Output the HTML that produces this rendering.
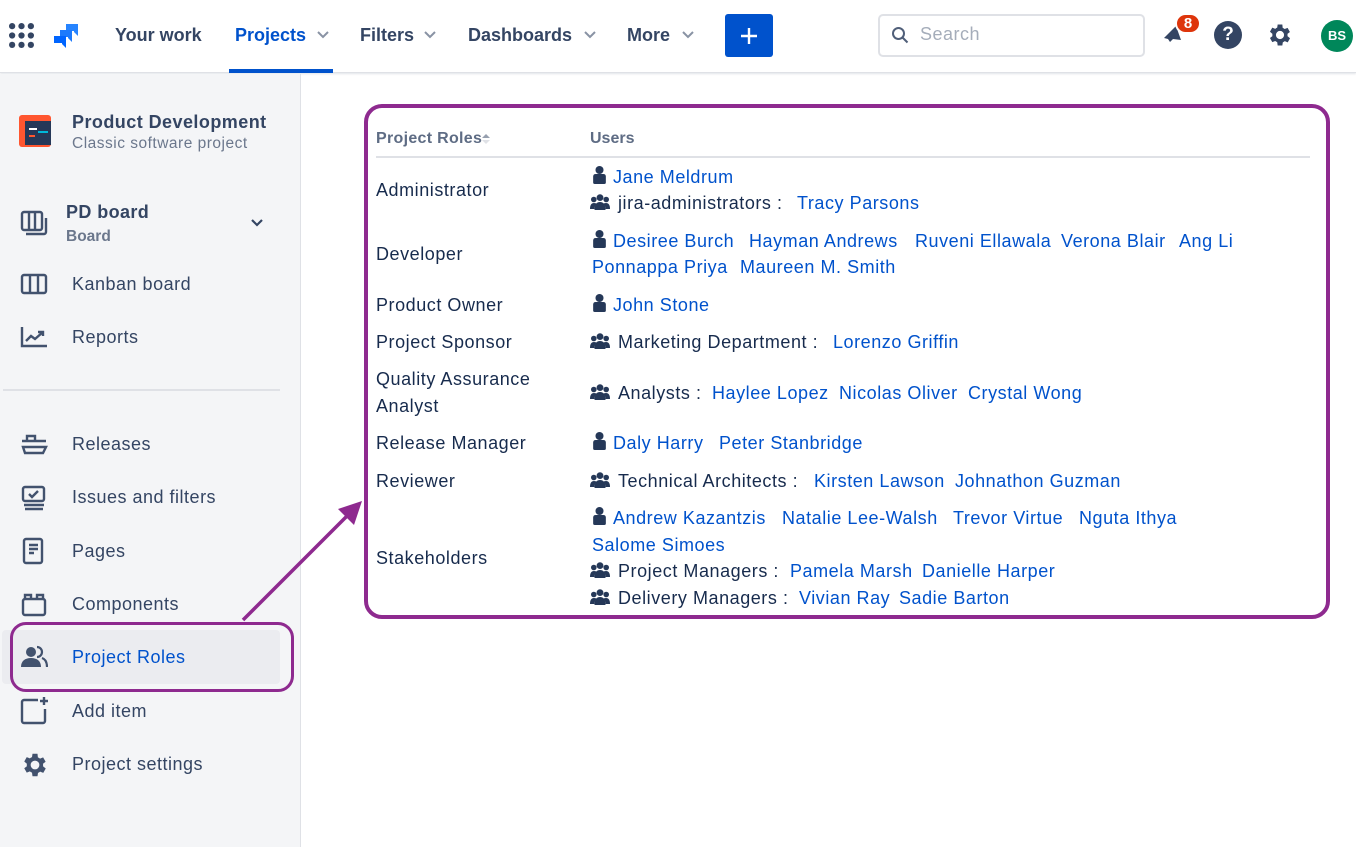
<!DOCTYPE html>
<html><head><meta charset="utf-8"><style>
*{margin:0;padding:0;box-sizing:border-box}
body{width:1356px;height:847px;overflow:hidden;background:#fff;font-family:"Liberation Sans",sans-serif;position:relative;color:#172b4d}
.a{position:absolute;white-space:nowrap}
.top{position:absolute;left:0;top:0;width:1356px;height:73px;background:#fff;border-bottom:1px solid #dfe1e6;box-shadow:0 1px 2px rgba(9,30,66,.12)}
.nav{position:absolute;top:25px;font-size:18px;font-weight:bold;color:#344563}
.side{position:absolute;left:0;top:74px;width:301px;height:773px;background:#f4f5f7;border-right:1px solid #dfe1e6}
.si{position:absolute;left:72px;font-size:18px;color:#344563;line-height:22px;letter-spacing:.5px}
.ic{position:absolute;left:20px}
.t{position:absolute;font-size:18px;line-height:22px;white-space:nowrap;color:#172b4d;letter-spacing:.55px}
.l{position:absolute;font-size:18px;line-height:22px;white-space:nowrap;color:#0052cc;letter-spacing:.55px}
.h{position:absolute;font-size:16px;font-weight:bold;color:#5e6c84;line-height:20px}
</style></head><body>
<div class="top"></div>
<svg class="a" style="left:9px;top:23px" width="25" height="25" viewBox="0 0 24 24" fill="#344563">
<circle cx="3" cy="3" r="3"/><circle cx="12" cy="3" r="3"/><circle cx="21" cy="3" r="3"/>
<circle cx="3" cy="12" r="3"/><circle cx="12" cy="12" r="3"/><circle cx="21" cy="12" r="3"/>
<circle cx="3" cy="21" r="3"/><circle cx="12" cy="21" r="3"/><circle cx="21" cy="21" r="3"/></svg>
<svg class="a" style="left:53px;top:24px" width="25" height="24" viewBox="0 0 25 24">
<path d="M13 0h12v12l-4-4v-1h-8z" fill="#2684ff"/><path d="M7 6h12v12l-4-4v-1H7z" fill="#1d7afc"/><path d="M1 12h12v12l-4-4v-1H1z" fill="#0065ff"/></svg>
<div class="nav" style="left:115px">Your work</div>
<div class="nav" style="left:235px;color:#0052cc">Projects</div>
<svg class="a" style="left:317px;top:31px" width="12" height="8"><path d="M1 1l5 5 5-5" stroke="#8993a4" stroke-width="2" fill="none"/></svg>
<div class="a" style="left:229px;top:69px;width:104px;height:4px;background:#0052cc"></div>
<div class="nav" style="left:360px">Filters</div>
<svg class="a" style="left:424px;top:31px" width="12" height="8"><path d="M1 1l5 5 5-5" stroke="#8993a4" stroke-width="2" fill="none"/></svg>
<div class="nav" style="left:468px">Dashboards</div>
<svg class="a" style="left:584px;top:31px" width="12" height="8"><path d="M1 1l5 5 5-5" stroke="#8993a4" stroke-width="2" fill="none"/></svg>
<div class="nav" style="left:627px">More</div>
<svg class="a" style="left:682px;top:31px" width="12" height="8"><path d="M1 1l5 5 5-5" stroke="#8993a4" stroke-width="2" fill="none"/></svg>
<div class="a" style="left:725px;top:14px;width:48px;height:43px;background:#0052cc;border-radius:3px"></div>
<svg class="a" style="left:740px;top:27px" width="18" height="18"><path d="M9 1v16M1 9h16" stroke="#fff" stroke-width="2.4"/></svg>
<div class="a" style="left:878px;top:14px;width:267px;height:43px;border:2px solid #dfe1e6;border-radius:5px;background:#fff"></div>
<svg class="a" style="left:891px;top:26px" width="18" height="18"><circle cx="7.5" cy="7.5" r="5.5" stroke="#505f79" stroke-width="2" fill="none"/><path d="M11.5 11.5l5 5" stroke="#505f79" stroke-width="2"/></svg>
<div class="a" style="left:920px;top:24px;font-size:18px;color:#a5adba;letter-spacing:.5px">Search</div>
<svg class="a" style="left:1162px;top:24px" width="24" height="24"><path d="M2 14l12-12 5 14-8-1-3 3-2-3z" fill="#344563"/></svg>
<div class="a" style="left:1175px;top:13px;width:26px;height:21px;background:#de350b;border-radius:11px;color:#fff;font-size:15px;font-weight:bold;text-align:center;line-height:17px;border:2px solid #fff">8</div>
<div class="a" style="left:1214px;top:21px;width:28px;height:28px;border-radius:50%;background:#344563;color:#fff;font-weight:bold;font-size:19px;text-align:center;line-height:28px">?</div>
<svg class="a" style="left:1266px;top:21px" width="28" height="28" viewBox="0 0 24 24"><path fill="#344563" d="M19.4 13a7.5 7.5 0 000-2l2.1-1.6-2-3.5-2.5 1a7 7 0 00-1.7-1L15 3h-4l-.4 2.7a7 7 0 00-1.7 1l-2.5-1-2 3.5L6.5 11a7.5 7.5 0 000 2l-2.1 1.6 2 3.5 2.5-1a7 7 0 001.7 1L11 21h4l.4-2.7a7 7 0 001.7-1l2.5 1 2-3.5zM13 15.5a3.5 3.5 0 110-7 3.5 3.5 0 010 7z" transform="translate(-1 0)"/></svg>
<div class="a" style="left:1321px;top:20px;width:32px;height:32px;border-radius:50%;background:#00875a;color:#fff;font-weight:bold;font-size:13px;text-align:center;line-height:32px">BS</div>

<div class="side"></div>
<div class="a" style="left:19px;top:115px;width:32px;height:32px;background:#ff5630;border-radius:3px"></div>
<div class="a" style="left:25px;top:121px;width:26px;height:24px;background:#253858"></div>
<div class="a" style="left:29px;top:128px;width:8px;height:2px;background:#fff"></div><div class="a" style="left:38px;top:131px;width:10px;height:2px;background:#00b8d9"></div>
<div class="a" style="left:29px;top:135px;width:6px;height:2px;background:#ff5630"></div>
<div class="a" style="left:72px;top:112px;font-size:18px;font-weight:bold;color:#344563;letter-spacing:.45px">Product Development</div>
<div class="a" style="left:72px;top:135px;font-size:15.5px;color:#6b778c;letter-spacing:.5px">Classic software project</div>

<svg class="ic" style="top:210px" width="28" height="26"><rect x="2" y="2" width="20" height="18" rx="2" stroke="#42526e" stroke-width="2.4" fill="none"/><path d="M9 2v18M15 2v18" stroke="#42526e" stroke-width="2.4"/><path d="M26 8v14a2 2 0 01-2 2H6" stroke="#42526e" stroke-width="2.4" fill="none"/></svg>
<div class="a" style="left:66px;top:202px;font-size:18px;font-weight:bold;color:#344563;letter-spacing:.4px">PD board</div>
<div class="a" style="left:66px;top:228px;font-size:15.5px;font-weight:bold;color:#6b778c">Board</div>
<svg class="a" style="left:251px;top:219px" width="12" height="8"><path d="M1 1l5 5 5-5" stroke="#344563" stroke-width="2.2" fill="none"/></svg>
<svg class="ic" style="top:273px" width="28" height="22"><rect x="2" y="2" width="24" height="18" rx="2" stroke="#42526e" stroke-width="2.4" fill="none"/><path d="M10 2v18M18 2v18" stroke="#42526e" stroke-width="2.4"/></svg>
<div class="si" style="top:273px">Kanban board</div>
<svg class="ic" style="top:326px" width="28" height="22"><path d="M2 1v19h25" stroke="#42526e" stroke-width="2.4" fill="none"/><path d="M6 15l5-5 4 3 8-7M18 6h5v4" stroke="#42526e" stroke-width="2.4" fill="none"/></svg>
<div class="si" style="top:326px">Reports</div>
<div class="a" style="left:3px;top:389px;width:277px;height:2px;background:#dfe1e6"></div>
<svg class="ic" style="top:433px" width="28" height="22"><path d="M7 8V3h8v5M2 8h24M3 14h23l-3 6H5z" stroke="#42526e" stroke-width="2.4" fill="none"/></svg>
<div class="si" style="top:433px">Releases</div>
<svg class="ic" style="top:485px" width="28" height="26"><rect x="3" y="2" width="21" height="14" rx="2" stroke="#42526e" stroke-width="2.4" fill="none"/><path d="M9 9l3 3 6-6M4 20h20M5 24h18" stroke="#42526e" stroke-width="2.4" fill="none"/></svg>
<div class="si" style="top:486px">Issues and filters</div>
<svg class="ic" style="top:537px" width="28" height="28"><rect x="4" y="2" width="18" height="24" rx="2" stroke="#42526e" stroke-width="2.4" fill="none"/><path d="M9 8h9M9 12h9M9 16h5" stroke="#42526e" stroke-width="2.4"/></svg>
<div class="si" style="top:540px">Pages</div>
<svg class="ic" style="top:593px" width="28" height="24"><rect x="3" y="6" width="22" height="16" rx="2" stroke="#42526e" stroke-width="2.4" fill="none"/><path d="M5 6V2h6v4M17 6V2h6v4" stroke="#42526e" stroke-width="2.4" fill="none"/></svg>
<div class="si" style="top:593px">Components</div>
<div class="a" style="left:2px;top:630px;width:278px;height:54px;background:#ebecf0;border-radius:4px"></div>
<div class="a" style="left:10px;top:622px;width:284px;height:70px;border:3px solid #8e2a8f;border-radius:16px"></div>
<svg class="ic" style="top:645px" width="28" height="24"><circle cx="11" cy="7" r="5" fill="#42526e"/><path d="M1 22c0-6 4-9 10-9s10 3 10 9z" fill="#42526e"/><path d="M17 2a5 5 0 010 10M22 13c3 1 5 4 5 9" stroke="#42526e" stroke-width="2.2" fill="none"/></svg>
<div class="si" style="top:646px;color:#0052cc">Project Roles</div>
<svg class="ic" style="top:697px" width="28" height="28"><path d="M18 3H4a2 2 0 00-2 2v19a2 2 0 002 2h19a2 2 0 002-2V12" stroke="#42526e" stroke-width="2.4" fill="none"/><path d="M24 0v8M20 4h8" stroke="#42526e" stroke-width="2.4"/></svg>
<div class="si" style="top:700px">Add item</div>
<svg class="ic" style="top:750px" width="30" height="30" viewBox="0 0 24 24"><path fill="#42526e" d="M19.4 13a7.5 7.5 0 000-2l2.1-1.6-2-3.5-2.5 1a7 7 0 00-1.7-1L15 3h-4l-.4 2.7a7 7 0 00-1.7 1l-2.5-1-2 3.5L6.5 11a7.5 7.5 0 000 2l-2.1 1.6 2 3.5 2.5-1a7 7 0 001.7 1L11 21h4l.4-2.7a7 7 0 001.7-1l2.5 1 2-3.5zM13 15.5a3.5 3.5 0 110-7 3.5 3.5 0 010 7z" transform="translate(-1 0)"/></svg>
<div class="si" style="top:753px">Project settings</div>

<svg class="a" style="left:0;top:0" width="1356" height="847">
<path d="M243 620L352 511" stroke="#8e2a8f" stroke-width="3.5"/>
<path d="M362 501l-24 8 16 16z" fill="#8e2a8f"/>
</svg>
<div class="a" style="left:364px;top:104px;width:966px;height:515px;border:4px solid #8e2a8f;border-radius:18px"></div>

<div class="h" style="left:376px;top:129px;letter-spacing:.3px">Project Roles</div>
<svg class="a" style="left:482px;top:134px" width="8" height="10"><path d="M0 4l4-4 4 4z" fill="#97a0af"/><path d="M0 6l4 4 4-4z" fill="#dfe1e6"/></svg>
<div class="h" style="left:590px;top:129px">Users</div>
<div class="a" style="left:376px;top:156px;width:934px;height:2px;background:#dfe1e6"></div>

<svg width="0" height="0" style="position:absolute"><defs>
<symbol id="p" viewBox="0 0 12 17"><circle cx="6" cy="3.8" r="3.8" fill="#253858"/><path d="M0 10q0-2.5 2.5-2.5h7q2.5 0 2.5 2.5v5.5q0 1.5-1.5 1.5h-9Q0 17 0 15.5z" fill="#253858"/></symbol>
<symbol id="g" viewBox="0 0 20 16"><circle cx="10" cy="3.6" r="3.4" fill="#253858"/><circle cx="3.8" cy="5.5" r="2.8" fill="#253858"/><circle cx="16.2" cy="5.5" r="2.8" fill="#253858"/><path d="M4.5 16q0-8 5.5-8t5.5 8z" fill="#253858"/><path d="M0 15q0-6 4-6 2 0 3 1-2.5 1.5-2.5 5zM20 15q0-6-4-6-2 0-3 1 2.5 1.5 2.5 5z" fill="#253858"/></symbol>
</defs></svg>

<div class="t" style="left:376px;top:179px">Administrator</div>
<svg class="a" style="left:593px;top:166px" width="13" height="18"><use href="#p"/></svg>
<div class="l" style="left:613px;top:166px">Jane Meldrum</div>
<svg class="a" style="left:590px;top:194px" width="20" height="16"><use href="#g"/></svg>
<div class="t" style="left:618px;top:192px">jira-administrators :</div>
<div class="l" style="left:797px;top:192px">Tracy Parsons</div>

<div class="t" style="left:376px;top:243px">Developer</div>
<svg class="a" style="left:593px;top:230px" width="13" height="18"><use href="#p"/></svg>
<div class="l" style="left:613px;top:230px">Desiree Burch</div>
<div class="l" style="left:749px;top:230px">Hayman Andrews</div>
<div class="l" style="left:915px;top:230px">Ruveni Ellawala</div>
<div class="l" style="left:1061px;top:230px">Verona Blair</div>
<div class="l" style="left:1179px;top:230px">Ang Li</div>
<div class="l" style="left:592px;top:256px">Ponnappa Priya</div>
<div class="l" style="left:740px;top:256px">Maureen M. Smith</div>

<div class="t" style="left:376px;top:294px">Product Owner</div>
<svg class="a" style="left:593px;top:294px" width="13" height="18"><use href="#p"/></svg>
<div class="l" style="left:613px;top:294px">John Stone</div>

<div class="t" style="left:376px;top:331px">Project Sponsor</div>
<svg class="a" style="left:590px;top:333px" width="20" height="16"><use href="#g"/></svg>
<div class="t" style="left:618px;top:331px">Marketing Department :</div>
<div class="l" style="left:833px;top:331px">Lorenzo Griffin</div>

<div class="t" style="left:376px;top:368px">Quality Assurance</div>
<div class="t" style="left:376px;top:395px">Analyst</div>
<svg class="a" style="left:590px;top:384px" width="20" height="16"><use href="#g"/></svg>
<div class="t" style="left:618px;top:382px">Analysts :</div>
<div class="l" style="left:712px;top:382px">Haylee Lopez</div>
<div class="l" style="left:839px;top:382px">Nicolas Oliver</div>
<div class="l" style="left:968px;top:382px">Crystal Wong</div>

<div class="t" style="left:376px;top:432px">Release Manager</div>
<svg class="a" style="left:593px;top:432px" width="13" height="18"><use href="#p"/></svg>
<div class="l" style="left:613px;top:432px">Daly Harry</div>
<div class="l" style="left:719px;top:432px">Peter Stanbridge</div>

<div class="t" style="left:376px;top:470px">Reviewer</div>
<svg class="a" style="left:590px;top:472px" width="20" height="16"><use href="#g"/></svg>
<div class="t" style="left:618px;top:470px">Technical Architects :</div>
<div class="l" style="left:814px;top:470px">Kirsten Lawson</div>
<div class="l" style="left:955px;top:470px">Johnathon Guzman</div>

<div class="t" style="left:376px;top:547px">Stakeholders</div>
<svg class="a" style="left:593px;top:507px" width="13" height="18"><use href="#p"/></svg>
<div class="l" style="left:613px;top:507px">Andrew Kazantzis</div>
<div class="l" style="left:782px;top:507px">Natalie Lee-Walsh</div>
<div class="l" style="left:953px;top:507px">Trevor Virtue</div>
<div class="l" style="left:1079px;top:507px">Nguta Ithya</div>
<div class="l" style="left:592px;top:534px">Salome Simoes</div>
<svg class="a" style="left:590px;top:562px" width="20" height="16"><use href="#g"/></svg>
<div class="t" style="left:618px;top:560px">Project Managers :</div>
<div class="l" style="left:790px;top:560px">Pamela Marsh</div>
<div class="l" style="left:922px;top:560px">Danielle Harper</div>
<svg class="a" style="left:590px;top:589px" width="20" height="16"><use href="#g"/></svg>
<div class="t" style="left:618px;top:587px">Delivery Managers :</div>
<div class="l" style="left:799px;top:587px">Vivian Ray</div>
<div class="l" style="left:899px;top:587px">Sadie Barton</div>
</body></html>
